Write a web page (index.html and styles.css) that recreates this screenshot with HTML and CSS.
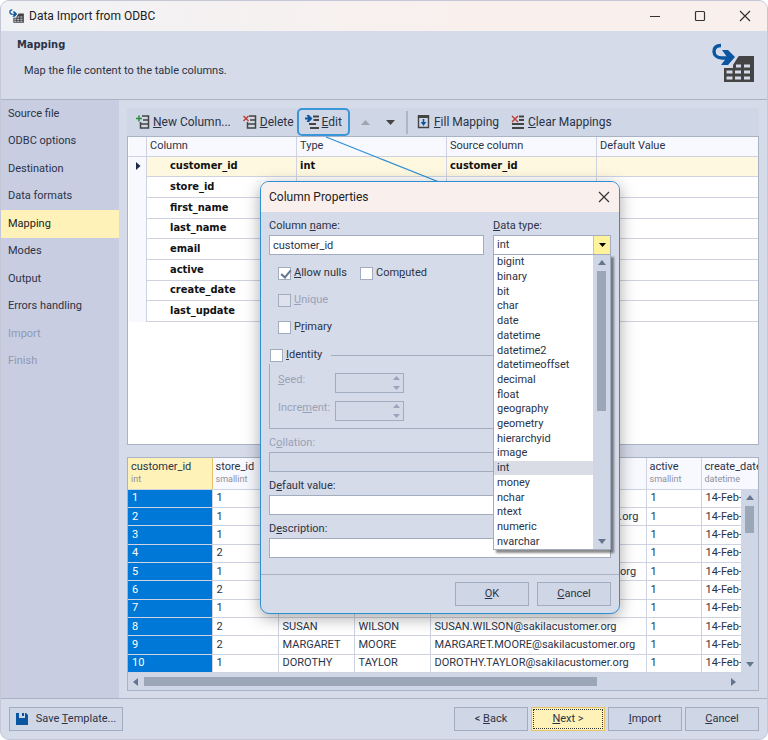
FILE: index.html
```html
<!DOCTYPE html>
<html lang="en">
<head>
    <meta charset="UTF-8">
    <meta name="viewport" content="width=device-width, initial-scale=1.0">
    <title>Data Import from ODBC</title>
    <link rel="stylesheet" href="styles.css">
</head>
<body>
    <svg class="symbols" width="0" height="0" aria-hidden="true">
        <symbol id="import-icon" viewBox="0 0 42 40">
            <path fill="#444" d="M12 39V25h9v-3l5-8 1-1h15v26z"/>
            <path fill="#d6dbe9" d="M24 21.500h5v3h-5zM32 21.500h6v3h-6zM14.500 27.500h6v3h-6zM23 27.500h6v3h-6zM32 27.500h6v3h-6zM14.500 33.500h6v3h-6zM23 33.500h6v3h-6zM32 33.500h6v3h-6z"/>
            <path fill="none" stroke="#0a56a0" stroke-width="3.400" d="M9 2.500C4 2.500 2 5 2 8.500S5 15 10 15h9"/>
            <path fill="#0a56a0" d="M10 7h6l7 7-7 8H9l6-8z"/>
        </symbol>
        <symbol id="columns-icon" viewBox="0 0 14 14">
            <path fill="none" stroke="#444" stroke-width="1.500" d="M6 1h6.500v12H4.500V7M5 9h7M7 5h5"/>
        </symbol>
        <symbol id="close-icon" viewBox="0 0 12 12">
            <path fill="none" stroke="#333" stroke-width="1.200" d="M1 1l10 10M11 1L1 11"/>
        </symbol>
    </svg>

    <div class="window">
        <div class="titlebar">
            <svg class="app-icon"><use href="#import-icon"/></svg>
            <span class="title">Data Import from ODBC</span>
            <button class="win-btn" aria-label="Minimize"><svg width="12" height="12"><path stroke="#333" stroke-width="1.200" d="M1 6.500h10"/></svg></button>
            <button class="win-btn" aria-label="Maximize"><svg width="12" height="12"><rect x="1.500" y="1.500" width="9" height="9" rx="1" fill="none" stroke="#333" stroke-width="1.200"/></svg></button>
            <button class="win-btn" aria-label="Close"><svg width="12" height="12"><use href="#close-icon"/></svg></button>
        </div>

        <div class="header">
            <div>
                <h1>Mapping</h1>
                <p>Map the file content to the table columns.</p>
            </div>
            <svg class="header-icon"><use href="#import-icon"/></svg>
        </div>

        <div class="content">
            <ul class="steps">
                <li>Source file</li>
                <li>ODBC options</li>
                <li>Destination</li>
                <li>Data formats</li>
                <li class="active">Mapping</li>
                <li>Modes</li>
                <li>Output</li>
                <li>Errors handling</li>
                <li class="disabled">Import</li>
                <li class="disabled">Finish</li>
            </ul>

            <div class="main">
                <div class="toolbar">
                    <button class="tool">
                        <svg width="14" height="14"><use href="#columns-icon"/><path fill="none" stroke="#2f8f3a" stroke-width="1.600" d="M0 3.500h6M3 .5v6"/></svg>
                        <span><u>N</u>ew Column...</span>
                    </button>
                    <button class="tool">
                        <svg width="14" height="14"><use href="#columns-icon"/><path fill="none" stroke="#c0392b" stroke-width="1.300" d="M.5 1l5 5M5.500 1l-5 5"/></svg>
                        <span><u>D</u>elete</span>
                    </button>
                    <button class="tool edit">
                        <svg width="14" height="14"><path fill="#0a56a0" d="M0 2.500h3L1.500 0H4l3.500 3.500L4 7H1.500L3 4.500H0z"/><path fill="none" stroke="#444" stroke-width="1.800" d="M8 1.500h6M8.500 5h5.500M4 9h7M5 13h9"/></svg>
                        <span><u>E</u>dit</span>
                    </button>
                    <button class="tool arrow" aria-label="Move up" disabled><svg width="9" height="5"><path fill="#a0a4ac" d="M0 5l4.500-5L9 5z"/></svg></button>
                    <button class="tool arrow" aria-label="Move down"><svg width="9" height="5"><path fill="#444" d="M0 0h9L4.500 5z"/></svg></button>
                    <span class="separator"></span>
                    <button class="tool">
                        <svg width="14" height="14"><path fill="none" stroke="#444" stroke-width="1.400" d="M1.500 2v10.500h10V2"/><path fill="#444" d="M.8 0h11.400v3H.8z"/><path fill="#0a56a0" d="M5.700 4h1.600v3h2L6.500 11 3.700 7h2z"/></svg>
                        <span><u>F</u>ill Mapping</span>
                    </button>
                    <button class="tool">
                        <svg width="14" height="14"><path fill="none" stroke="#444" stroke-width="1.800" d="M8 1.500h5M8 5h5M1 9h12M1 13h12"/><path fill="none" stroke="#c0392b" stroke-width="1.400" d="M1 1l6 6M7 1L1 7"/></svg>
                        <span><u>C</u>lear Mappings</span>
                    </button>
                </div>

                <div class="mapping">
                    <table>
                        <colgroup><col class="c-mark"><col class="c-name"><col class="c-name"><col class="c-name"><col></colgroup>
                        <thead>
                            <tr><th></th><th>Column</th><th>Type</th><th>Source column</th><th>Default Value</th></tr>
                        </thead>
                        <tbody>
                            <tr class="current"><td><svg width="5" height="8"><path fill="#1e2a44" d="M0 0l4.500 4L0 8z"/></svg></td><td>customer_id</td><td>int</td><td>customer_id</td><td></td></tr>
                            <tr><td></td><td>store_id</td><td></td><td></td><td></td></tr>
                            <tr><td></td><td>first_name</td><td></td><td></td><td></td></tr>
                            <tr><td></td><td>last_name</td><td></td><td></td><td></td></tr>
                            <tr><td></td><td>email</td><td></td><td></td><td></td></tr>
                            <tr><td></td><td>active</td><td></td><td></td><td></td></tr>
                            <tr><td></td><td>create_date</td><td></td><td></td><td></td></tr>
                            <tr><td></td><td>last_update</td><td></td><td></td><td></td></tr>
                        </tbody>
                    </table>
                </div>

                <div class="preview">
                    <div class="preview-data">
                        <table>
                            <colgroup><col class="d-id"><col class="d-store"><col class="d-first"><col class="d-last"><col class="d-email"><col class="d-active"><col class="d-date"></colgroup>
                            <thead>
                                <tr>
                                    <th>customer_id<small>int</small></th>
                                    <th>store_id<small>smallint</small></th>
                                    <th></th>
                                    <th></th>
                                    <th></th>
                                    <th>active<small>smallint</small></th>
                                    <th>create_date<small>datetime</small></th>
                                </tr>
                            </thead>
                            <tbody>
                                <tr><td>1</td><td>1</td><td></td><td></td><td></td><td>1</td><td>14-Feb-</td></tr>
                                <tr><td>2</td><td>1</td><td></td><td></td><td>PATRICIA.JOHNSON@sakilacustomer.org</td><td>1</td><td>14-Feb-</td></tr>
                                <tr><td>3</td><td>1</td><td></td><td></td><td></td><td>1</td><td>14-Feb-</td></tr>
                                <tr><td>4</td><td>2</td><td></td><td></td><td></td><td>1</td><td>14-Feb-</td></tr>
                                <tr><td>5</td><td>1</td><td></td><td></td><td>ELIZABETH.BROWN@sakilacustomer.org</td><td>1</td><td>14-Feb-</td></tr>
                                <tr><td>6</td><td>2</td><td></td><td></td><td></td><td>1</td><td>14-Feb-</td></tr>
                                <tr><td>7</td><td>1</td><td></td><td></td><td></td><td>1</td><td>14-Feb-</td></tr>
                                <tr><td>8</td><td>2</td><td>SUSAN</td><td>WILSON</td><td>SUSAN.WILSON@sakilacustomer.org</td><td>1</td><td>14-Feb-</td></tr>
                                <tr><td>9</td><td>2</td><td>MARGARET</td><td>MOORE</td><td>MARGARET.MOORE@sakilacustomer.org</td><td>1</td><td>14-Feb-</td></tr>
                                <tr><td>10</td><td>1</td><td>DOROTHY</td><td>TAYLOR</td><td>DOROTHY.TAYLOR@sakilacustomer.org</td><td>1</td><td>14-Feb-</td></tr>
                            </tbody>
                        </table>
                        <div class="vscroll">
                            <svg width="8" height="5"><path fill="#66758f" d="M0 5l4-5 4 5z"/></svg>
                            <span class="thumb"></span>
                            <svg width="8" height="5"><path fill="#66758f" d="M0 0h8L4 5z"/></svg>
                        </div>
                    </div>
                    <div class="hscroll">
                        <svg width="5" height="8"><path fill="#66758f" d="M5 0v8L0 4z"/></svg>
                        <div class="track"><span class="thumb"></span></div>
                        <svg width="5" height="8"><path fill="#66758f" d="M0 0v8l5-4z"/></svg>
                    </div>
                </div>
            </div>
        </div>

        <div class="footer">
            <button class="btn save">
                <svg width="12" height="12"><path fill="#0a56a0" d="M0 0h3v5h6V0h1l2 2v10H0z"/><path fill="#0a56a0" d="M6 0h2v3H6z"/></svg>
                <span>Save <u>T</u>emplate...</span>
            </button>
            <button class="btn"><span>&lt; <u>B</u>ack</span></button>
            <button class="btn next"><span><u>N</u>ext &gt;</span></button>
            <button class="btn"><span><u>I</u>mport</span></button>
            <button class="btn"><span><u>C</u>ancel</span></button>
        </div>

        <svg class="pointer" width="116" height="47"><path fill="none" stroke="#2d8fd5" stroke-width="1.300" d="M1 1l113 45"/></svg>

        <form class="dialog">
            <div class="titlebar">
                <span class="title">Column Properties</span>
                <button type="button" class="win-btn" aria-label="Close"><svg width="12" height="12"><use href="#close-icon"/></svg></button>
            </div>
            <div class="dialog-body">
                <div class="row">
                    <div class="field name">
                        <label for="column-name">Column <u>n</u>ame:</label>
                        <input type="text" id="column-name" value="customer_id">
                    </div>
                    <div class="field type">
                        <label for="data-type"><u>D</u>ata type:</label>
                        <div class="combo">
                            <select id="data-type"><option>int</option></select>
                            <span class="combo-arrow"><svg width="7" height="4"><path d="M0 0h7L3.500 4z"/></svg></span>
                        </div>
                        <div class="dropdown">
                            <ul>
                                <li>bigint</li>
                                <li>binary</li>
                                <li>bit</li>
                                <li>char</li>
                                <li>date</li>
                                <li>datetime</li>
                                <li>datetime2</li>
                                <li>datetimeoffset</li>
                                <li>decimal</li>
                                <li>float</li>
                                <li>geography</li>
                                <li>geometry</li>
                                <li>hierarchyid</li>
                                <li>image</li>
                                <li class="selected">int</li>
                                <li>money</li>
                                <li>nchar</li>
                                <li>ntext</li>
                                <li>numeric</li>
                                <li>nvarchar</li>
                            </ul>
                            <div class="dropdown-scroll">
                                <svg width="8" height="5"><path fill="#66758f" d="M0 5l4-5 4 5z"/></svg>
                                <span class="thumb"></span>
                                <svg width="8" height="5"><path fill="#66758f" d="M0 0h8L4 5z"/></svg>
                            </div>
                        </div>
                    </div>
                </div>

                <div class="checks">
                    <div class="check-row">
                        <label class="check"><input type="checkbox" checked><span><u>A</u>llow nulls</span></label>
                        <label class="check"><input type="checkbox"><span>Com<u>p</u>uted</span></label>
                    </div>
                    <label class="check off"><input type="checkbox" disabled><span><u>U</u>nique</span></label>
                    <label class="check"><input type="checkbox"><span>P<u>r</u>imary</span></label>
                </div>

                <div class="group">
                    <div class="group-title">
                        <label class="check"><input type="checkbox"><span><u>I</u>dentity</span></label>
                    </div>
                    <div class="group-body">
                        <label for="seed"><u>S</u>eed:</label>
                        <div class="spin">
                            <input type="text" id="seed" disabled>
                            <svg width="7" height="14"><path fill="#9aa5bb" d="M0 4l3.500-4L7 4zM0 10h7l-3.500 4z"/></svg>
                        </div>
                        <label for="increment">Incre<u>m</u>ent:</label>
                        <div class="spin">
                            <input type="text" id="increment" disabled>
                            <svg width="7" height="14"><path fill="#9aa5bb" d="M0 4l3.500-4L7 4zM0 10h7l-3.500 4z"/></svg>
                        </div>
                    </div>
                </div>

                <div class="field off">
                    <label for="collation">C<u>o</u>llation:</label>
                    <input type="text" id="collation" disabled>
                </div>
                <div class="field">
                    <label for="default-value">D<u>e</u>fault value:</label>
                    <input type="text" id="default-value">
                </div>
                <div class="field">
                    <label for="description">D<u>e</u>scription:</label>
                    <input type="text" id="description">
                </div>
            </div>
            <div class="dialog-footer">
                <button type="button" class="btn"><span><u>O</u>K</span></button>
                <button type="button" class="btn"><span><u>C</u>ancel</span></button>
            </div>
        </form>
    </div>
</body>
</html>
```
FILE: styles.css
```css
* {
    box-sizing: border-box;
}

body {
    margin: 0;
    background-color: #fff;
    color: #2b3347;
    font-family: Roboto, sans-serif;
    font-size: 11px;
    line-height: 14px;
}

button,
input,
select {
    font: inherit;
    color: inherit;
    margin: 0;
}

svg {
    display: block;
    flex: none;
}

table {
    border-collapse: collapse;
    table-layout: fixed;
}

ul {
    list-style: none;
    margin: 0;
    padding: 0;
}

.symbols {
    position: absolute;
}

.window {
    position: relative;
    display: flex;
    flex-direction: column;
    min-height: 100vh;
    border: 1px solid #c3c7d6;
    border-radius: 9px;
    background-color: #d6dbe9;
    overflow: hidden;
}

.titlebar {
    display: flex;
    align-items: center;
    height: 30px;
    padding-left: 8px;
    background: linear-gradient(90deg, #f1f2f5, #f9f0ee 60%);
    color: #222;
}

.title {
    flex: 1;
    font-size: 12px;
}

.app-icon {
    width: 15px;
    height: 14px;
    margin-right: 5px;
}

.win-btn {
    display: flex;
    align-items: center;
    justify-content: center;
    width: 45px;
    height: 29px;
    padding: 0;
    border: none;
    background: none;
}

.header {
    display: flex;
    justify-content: space-between;
    height: 69px;
    padding: 6px 13px 0 16px;
    border-bottom: 1px solid #a9b3c3;
}

.header h1 {
    margin: 0;
    font-family: 'DejaVu Sans Condensed', sans-serif;
    font-size: 11px;
    line-height: 16px;
}

.header p {
    margin: 11px 0 0 7px;
}

.header-icon {
    width: 42px;
    height: 40px;
    margin-top: 6px;
}

.content {
    flex: 1;
    display: flex;
    min-height: 0;
}

/* Wizard steps */
.steps {
    display: grid;
    grid-auto-rows: 1fr;
    align-self: stretch;
    align-content: start;
    width: 118px;
    padding-bottom: 323px;
    background-color: #c8cde2;
}

.steps li {
    display: flex;
    align-items: center;
    padding-left: 7px;
}

.steps .active {
    background-color: #fff2b8;
    color: #222;
}

.steps .disabled {
    color: #8f9ab2;
}

.main {
    flex: 1;
    display: flex;
    flex-direction: column;
    min-width: 0;
    padding: 8px 8px 7px;
}

/* Toolbar */
.toolbar {
    display: flex;
    align-items: center;
    height: 28px;
    padding-left: 3px;
    background-color: #cfd6e5;
}

.tool {
    display: flex;
    align-items: center;
    gap: 3px;
    height: 28px;
    padding: 0 5px;
    border: 1px solid transparent;
    border-radius: 5px;
    background: none;
    font-size: 12px;
    white-space: nowrap;
}

.tool.edit {
    margin: 0 3px 0 -3px;
    padding: 0 6px;
    border: 2px solid #3a96d8;
}

.tool.arrow {
    padding: 0 7px;
}

.separator {
    width: 2px;
    height: 23px;
    margin: 0 3px;
    background-color: #aeb6c6;
}

/* Column mapping grid */
.mapping {
    flex: 1;
    border: 1px solid #a9b3c3;
    background-color: #fff;
}

.mapping table {
    width: 100%;
    height: 185px;
}

.c-mark {
    width: 18px;
}

.c-name {
    width: 150px;
}

.mapping th,
.mapping td {
    padding: 0 3px;
    border: 1px solid #cfd2e0;
    border-top: none;
    text-align: left;
}

.mapping th {
    height: 19px;
    background-color: #f8f9fe;
    font-weight: normal;
}

.mapping td {
    color: #111;
    font-family: 'DejaVu Sans Condensed', sans-serif;
    font-weight: bold;
}

.mapping td:nth-child(2) {
    padding-left: 23px;
}

.mapping td:first-child {
    padding: 0 7px;
    border-color: transparent #cfd2e0 transparent transparent;
    background-color: #f8f9fe;
}

.mapping th:first-child {
    border-left: none;
}

.mapping th:last-child,
.mapping td:last-child {
    border-right: none;
}

.current td {
    background-color: #fff8e0;
}

/* Data preview */
.preview {
    margin-top: 12px;
    border: 1px solid #a9b3c3;
    background-color: #cfd6e5;
}

.preview-data {
    position: relative;
    overflow: hidden;
}

.preview table {
    width: 646px;
    height: 215px;
    background-color: #fff;
}

.d-id {
    width: 84px;
}

.d-store {
    width: 66px;
}

.d-first,
.d-last {
    width: 76px;
}

.d-email {
    width: 216px;
}

.d-active {
    width: 55px;
}

.preview th,
.preview td {
    padding: 0 4px;
    border: 1px solid #cfd2e0;
    text-align: left;
    white-space: nowrap;
}

.preview tr > :first-child {
    border-left: none;
}

.preview th {
    height: 31px;
    padding-left: 3px;
    border-top: none;
    background-color: #f8f9fe;
    font-weight: normal;
    line-height: 12px;
}

.preview th:first-child {
    border-right: 1px solid #e5c365;
    background-color: #fff2b8;
}

.preview small {
    display: block;
    color: #8d8f9a;
    font-size: 9px;
}

.preview td:first-child {
    background-color: #0078d7;
    color: #fff;
}

.thumb {
    display: block;
    background-color: #9ba6b7;
}

.vscroll {
    position: absolute;
    top: 31px;
    right: 0;
    bottom: 0;
    width: 17px;
    display: flex;
    flex-direction: column;
    align-items: center;
    padding: 6px 0;
    background-color: #cfd6e5;
}

.vscroll .thumb {
    width: 9px;
    height: 27px;
    margin: 6px 0 auto;
}

.hscroll {
    display: flex;
    align-items: center;
    height: 17px;
    padding: 0 22px 0 5px;
}

.hscroll .track {
    flex: 1;
    margin: 0 54px 0 6px;
}

.hscroll .thumb {
    width: 85%;
    height: 9px;
}

/* Buttons */
.footer {
    display: flex;
    align-items: center;
    gap: 3px;
    height: 41px;
    padding: 0 8px;
    border-top: 1px solid #a9b3c3;
}

.btn {
    display: flex;
    align-items: center;
    justify-content: center;
    width: 74px;
    height: 24px;
    padding: 0;
    border: 1px solid #a1acbf;
    background-color: #cfd6e5;
}

.btn.save {
    gap: 8px;
    width: 114px;
    margin-right: auto;
}

.btn.next {
    border-color: #e5c365;
    background-color: #fff2b8;
    outline: 1px dotted #333;
    outline-offset: -3px;
}

/* Callout line from the Edit button to the dialog */
.pointer {
    position: absolute;
    top: 135px;
    left: 324px;
}

/* Column properties dialog */
.dialog {
    position: absolute;
    top: 180px;
    left: 259px;
    width: 360px;
    border: 1px solid #2d8fd5;
    border-radius: 9px;
    background-color: #d6dbe9;
    box-shadow: 0 4px 16px rgba(0, 0, 0, 0.35);
}

.dialog .titlebar {
    border-radius: 8px 8px 0 0;
    background: #f9f0ee;
}

.dialog .win-btn {
    width: 30px;
}

.dialog-body {
    padding: 7px 8px 9px;
}

.row {
    display: flex;
    gap: 9px;
}

.field {
    display: flex;
    flex-direction: column;
    gap: 2px;
    margin-bottom: 7px;
}

.field.name {
    flex: 1;
}

.field.type {
    position: relative;
    width: 118px;
}

.field input,
.spin,
.combo {
    height: 20px;
    padding: 0 3px;
    border: 1px solid #a1acbf;
    border-radius: 0;
    background-color: #fff;
}

.field.off,
.check.off {
    color: #98a2b8;
}

.field.off input {
    background-color: #d3d9e6;
}

.combo {
    display: flex;
    padding: 0;
}

.combo select {
    flex: 1;
    appearance: none;
    padding: 0 3px;
    border: none;
    background: none;
}

.combo-arrow {
    display: flex;
    align-items: center;
    justify-content: center;
    width: 17px;
    border-left: 1px solid #e5c365;
    background-color: #fff29d;
}

.dropdown {
    position: absolute;
    z-index: 1;
    top: 35px;
    left: 0;
    right: 0;
    display: flex;
    border: 1px solid #a1acbf;
    background-color: #fff;
    box-shadow: 3px 3px 2px rgba(0, 0, 0, 0.45);
}

.dropdown ul {
    flex: 1;
    display: grid;
    grid-auto-rows: 1fr;
    height: 294px;
}

.dropdown li {
    display: flex;
    align-items: center;
    padding-left: 3px;
    line-height: 12px;
}

.dropdown .selected {
    background-color: #d9dce4;
}

.dropdown-scroll {
    display: flex;
    flex-direction: column;
    align-items: center;
    width: 17px;
    padding: 5px 0;
    background-color: #cfd6e5;
}

.dropdown-scroll .thumb {
    width: 9px;
    height: 140px;
    margin: 6px 0 auto;
}

.checks {
    display: flex;
    flex-direction: column;
    gap: 13px;
    margin: 4px 0 14px 9px;
}

.check-row {
    display: flex;
    gap: 13px;
}

.check {
    display: flex;
    align-items: center;
    gap: 3px;
}

.check input {
    appearance: none;
    width: 13px;
    height: 13px;
    border: 1px solid #a1acbf;
    background-color: #fff;
}

.check input:checked::before {
    content: '';
    display: block;
    width: 4px;
    height: 8px;
    margin-left: 4px;
    border: solid #66758f;
    border-width: 0 2px 2px 0;
    transform: rotate(40deg);
}

.check input:disabled {
    background-color: #dde2ee;
}

.group-title {
    display: flex;
    align-items: center;
    gap: 9px;
    padding-left: 1px;
}

.group-title::after {
    content: '';
    flex: 1;
    border-top: 1px solid #a1acbf;
}

.group-body {
    display: grid;
    grid-template-columns: 57px 69px;
    row-gap: 8px;
    margin: 2px 0 7px;
    padding: 9px 8px 7px;
    border: 1px solid #a1acbf;
    border-top: none;
    color: #98a2b8;
}

.spin {
    display: flex;
    align-items: center;
    background-color: #d3d9e6;
}

.spin input {
    flex: 1;
    min-width: 0;
    border: none;
    background: none;
}

.dialog-footer {
    display: flex;
    justify-content: flex-end;
    gap: 8px;
    padding: 7px 8px;
    border-top: 1px solid #a9b3c3;
}
```
